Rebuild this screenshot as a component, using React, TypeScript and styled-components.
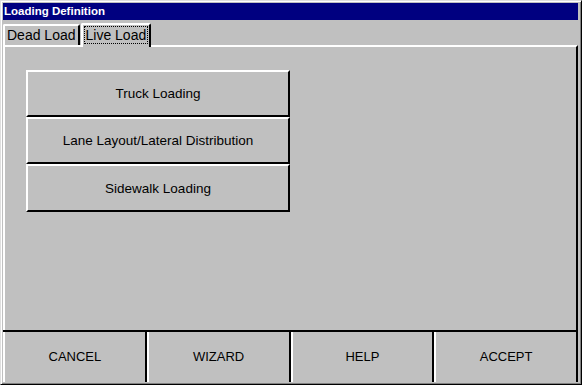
import React from "react";
import styled, { createGlobalStyle } from "styled-components";

const GlobalStyle = createGlobalStyle`
  html, body {
    margin: 0;
    padding: 0;
    background: #c0c0c0;
  }
  body {
    font-family: "Liberation Sans", Arial, sans-serif;
  }
`;

const Window = styled.div`
  box-sizing: border-box;
  width: 582px;
  height: 385px;
  display: flex;
  flex-direction: column;
  background: #c0c0c0;
  border-top: 1px solid #dfdfdf;
  border-left: 1px solid #dfdfdf;
  border-right: 1px solid #000;
  border-bottom: 1px solid #000;
  box-shadow: inset 1px 1px 0 #fff, inset -1px -1px 0 #808080;
  padding: 2px 3px 2px 2px;
`;

const TitleBar = styled.div`
  height: 17px;
  background: #000080;
  color: #fff;
  font-weight: bold;
  font-size: 11.5px;
  line-height: 17px;
  padding-left: 1px;
  flex-shrink: 0;
`;

const TabStrip = styled.div`
  display: flex;
  align-items: flex-end;
  height: 25px;
  flex-shrink: 0;
`;

const Tab = styled.div<{ $active?: boolean }>`
  box-sizing: border-box;
  height: ${(p) => (p.$active ? "24px" : "21px")};
  padding: 0 ${(p) => (p.$active ? "2px" : "2px")};
  margin-right: ${(p) => (p.$active ? "0" : "1px")};
  font-size: 14px;
  line-height: ${(p) => (p.$active ? "20px" : "19px")};
  color: #000;
  border-top: 2px solid #fff;
  border-left: 2px solid #fff;
  border-right: 2px solid #000;
  border-radius: 2px 2px 0 0;
  position: relative;
  z-index: ${(p) => (p.$active ? 1 : 0)};
  margin-bottom: ${(p) => (p.$active ? "-2px" : "0")};
  background: #c0c0c0;
`;

const TabLabel = styled.span<{ $focused?: boolean }>`
  padding: 0 1px;
  outline: ${(p) => (p.$focused ? "1px dotted #000" : "none")};
`;

const Panel = styled.div`
  flex: 1;
  border-top: 2px solid #fff;
  border-left: 2px solid #fff;
  border-right: 2px solid #000;
  padding: 23px 0 0 21px;
`;

const Stack = styled.div`
  width: 264px;
  display: flex;
  flex-direction: column;
`;

const BigButton = styled.div`
  box-sizing: border-box;
  height: 47px;
  display: flex;
  align-items: center;
  justify-content: center;
  font-size: 13.5px;
  color: #000;
  border-top: 2px solid #fff;
  border-left: 2px solid #fff;
  border-right: 2px solid #000;
  border-bottom: 2px solid #000;
  &:last-child {
    height: 48px;
  }
`;

const ButtonBar = styled.div`
  height: 50px;
  display: flex;
  flex-shrink: 0;
  border-top: 2px solid #000;
`;

const BarButton = styled.div`
  box-sizing: border-box;
  flex: 1;
  display: flex;
  align-items: center;
  justify-content: center;
  font-size: 13px;
  color: #000;
  border-left: 2px solid #fff;
  border-right: 2px solid #000;
  padding-bottom: 2px;
`;

export default function App() {
  return (
    <>
      <GlobalStyle />
      <Window>
        <TitleBar>Loading Definition</TitleBar>
        <TabStrip>
          <Tab>Dead Load</Tab>
          <Tab $active>
            <TabLabel $focused>Live Load</TabLabel>
          </Tab>
        </TabStrip>
        <Panel>
          <Stack>
            <BigButton>Truck Loading</BigButton>
            <BigButton>Lane Layout/Lateral Distribution</BigButton>
            <BigButton>Sidewalk Loading</BigButton>
          </Stack>
        </Panel>
        <ButtonBar>
          <BarButton>CANCEL</BarButton>
          <BarButton>WIZARD</BarButton>
          <BarButton>HELP</BarButton>
          <BarButton>ACCEPT</BarButton>
        </ButtonBar>
      </Window>
    </>
  );
}
